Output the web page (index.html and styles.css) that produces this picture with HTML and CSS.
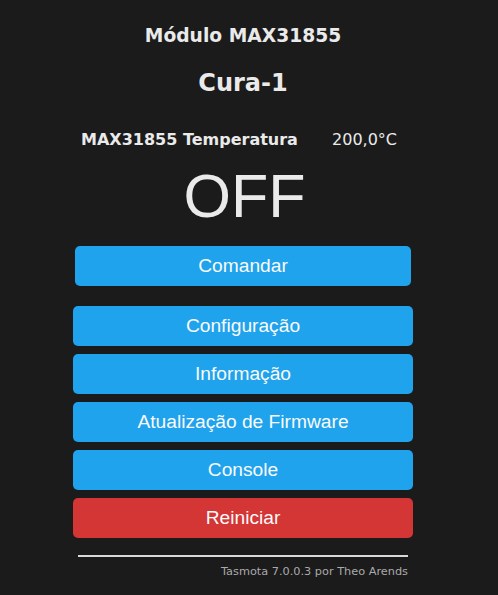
FILE: index.html
```html
<!DOCTYPE html>
<html>
<head>
<meta charset="utf-8">
<link rel="stylesheet" href="styles.css">
</head>
<body>
<div class="wrap">
  <div class="head">
    <h3 class="module">Módulo MAX31855</h3>
    <h2 class="device">Cura-1</h2>
  </div>
  <div class="sensor">
    <span class="label">MAX31855 Temperatura</span>
    <span class="value">200,0°C</span>
  </div>
  <div class="state">OFF</div>
  <div class="toggle-row">
    <button class="btn">Comandar</button>
  </div>
  <div class="menu">
    <button class="btn">Configuração</button>
    <button class="btn">Informação</button>
    <button class="btn">Atualização de Firmware</button>
    <button class="btn">Console</button>
    <button class="btn btn-red">Reiniciar</button>
  </div>
  <div class="foot">
    <div class="rule"></div>
    <div class="credit">Tasmota 7.0.0.3 por Theo Arends</div>
  </div>
</div>
</body>
</html>
```
FILE: styles.css
```css
html, body {
  margin: 0;
  padding: 0;
  background: #1b1b1b;
}
body {
  color: #eaeaea;
  font-family: "DejaVu Sans", Verdana, sans-serif;
}
.wrap {
  width: 340px;
  margin-left: 73px;
  display: flex;
  flex-direction: column;
}
.head {
  text-align: center;
  padding-top: 24px;
}
.module {
  margin: 0;
  font-size: 18.7px;
  line-height: 24px;
  font-weight: bold;
}
.device {
  margin: 20px 0 0;
  font-size: 24px;
  line-height: 30px;
  font-weight: bold;
}
.sensor {
  margin-top: 31px;
  display: flex;
  justify-content: space-between;
  padding: 0 16px 0 8px;
  font-size: 16px;
  line-height: 22px;
}
.label {
  font-weight: bold;
}
.value {
  font-size: 16px;
}
.state {
  text-align: center;
  font-family: "Liberation Sans", Arial, sans-serif;
  font-size: 61px;
  line-height: 76px;
  margin-top: 7px;
  padding-left: 3px;
  color: #eaeaea;
}
.toggle-row {
  padding: 12px 2px 0;
  display: flex;
}
.btn {
  display: block;
  width: 100%;
  height: 40px;
  border: 0;
  border-radius: 5px;
  background: #1fa3ec;
  color: #fafafa;
  font-family: "Liberation Sans", Arial, sans-serif;
  font-size: 19.2px;
  padding: 0;
  text-align: center;
}
.btn-red {
  background: #d43535;
}
.menu {
  margin-top: 20px;
  display: flex;
  flex-direction: column;
  gap: 8px;
}
.foot {
  padding: 17px 5px 0;
}
.rule {
  height: 2px;
  background: #d8d8d8;
}
.credit {
  text-align: right;
  font-size: 11.3px;
  line-height: 14px;
  margin-top: 8px;
  color: #aaaaaa;
}
```
